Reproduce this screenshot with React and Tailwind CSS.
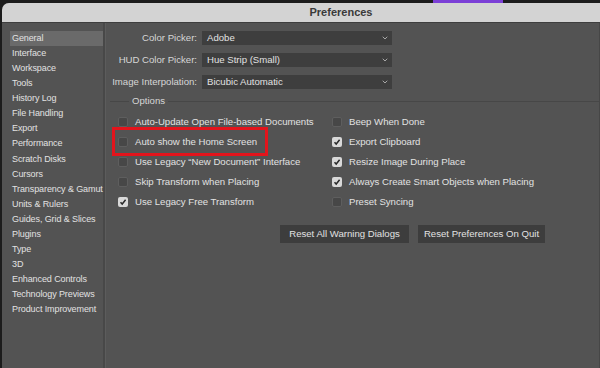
import React from 'react';
import { ChevronDown } from 'lucide-react';

const sections = [
  'General',
  'Interface',
  'Workspace',
  'Tools',
  'History Log',
  'File Handling',
  'Export',
  'Performance',
  'Scratch Disks',
  'Cursors',
  'Transparency & Gamut',
  'Units & Rulers',
  'Guides, Grid & Slices',
  'Plugins',
  'Type',
  '3D',
  'Enhanced Controls',
  'Technology Previews',
  'Product Improvement',
];

const pickers = [
  { label: 'Color Picker:', value: 'Adobe' },
  { label: 'HUD Color Picker:', value: 'Hue Strip (Small)' },
  { label: 'Image Interpolation:', value: 'Bicubic Automatic' },
];

const leftOptions = [
  { label: 'Auto-Update Open File-based Documents', checked: false },
  { label: 'Auto show the Home Screen', checked: false },
  { label: 'Use Legacy \u201CNew Document\u201D Interface', checked: false },
  { label: 'Skip Transform when Placing', checked: false },
  { label: 'Use Legacy Free Transform', checked: true },
];

const rightOptions = [
  { label: 'Beep When Done', checked: false },
  { label: 'Export Clipboard', checked: true },
  { label: 'Resize Image During Place', checked: true },
  { label: 'Always Create Smart Objects when Placing', checked: true },
  { label: 'Preset Syncing', checked: false },
];

const Checkbox = ({ checked }) => (
  <span
    className={`flex h-[10px] w-[10px] shrink-0 items-center justify-center rounded-[2px] ${
      checked ? 'bg-[#d9d9d9]' : 'border border-[#5e5e5e] bg-[#474747]'
    }`}
  >
    {checked && (
      <svg width="8" height="8" viewBox="0 0 8 8">
        <polyline points="1.5,4.2 3.2,6 6.6,1.8" fill="none" stroke="#2a2a2a" strokeWidth="1.5" />
      </svg>
    )}
  </span>
);

const OptionRow = ({ label, checked, highlight }) => (
  <div className="relative flex h-[20px] items-center gap-[7px]">
    <Checkbox checked={checked} />
    <span className="whitespace-nowrap">{label}</span>
    {highlight && (
      <span className="absolute left-[-6px] top-[-5px] h-[29px] w-[156px] border-[3px] border-[#e3141c]" />
    )}
  </div>
);

const App = () => {
  return (
    <div
      className="flex h-[368px] w-[600px] flex-col overflow-hidden bg-[#1c1c1c] text-[#e2e2e2]"
      style={{ fontFamily: '"Liberation Sans", Arial, sans-serif' }}
    >
      {/* desktop strip */}
      <div className="flex h-[3px] shrink-0">
        <div className="ml-[433px] w-[70px] bg-[#7b3fd6]" />
      </div>

      <div className="ml-[2px] flex flex-1 flex-col overflow-hidden rounded-tl-[7px] bg-[#535353]">
        {/* Title bar */}
        <div className="flex h-[20px] shrink-0 items-center justify-center border-b border-[#3e3e3e] bg-[#d3d3d3] pl-[80px] text-[11px] font-bold text-[#3a3a3a]">
          Preferences
        </div>

        <div className="flex flex-1">
          {/* Sidebar */}
          <div className="flex w-[103px] shrink-0 flex-col border-r-2 border-[#484848] pl-[8px] pt-[8px] text-[9px] tracking-[-0.1px]">
            {sections.map((s, i) => (
              <div
                key={s}
                className={`flex h-[15.1px] items-center pl-[2px] whitespace-nowrap ${
                  i === 0 ? 'bg-[#6a6a6a]' : ''
                }`}
              >
                {s}
              </div>
            ))}
          </div>

          {/* Main panel */}
          <div className="flex flex-1 flex-col border-l border-[#5c5c5c] border-r border-r-[#464646] pt-[8px] text-[9.6px]">
            <div className="grid grid-cols-[96px_190px] gap-y-[8px]">
              {pickers.map((p) => (
                <React.Fragment key={p.label}>
                  <div className="flex h-[14px] items-center justify-end pr-[5px] text-[#d6d6d6] whitespace-nowrap">
                    {p.label}
                  </div>
                  <div className="flex h-[14px] items-center justify-between bg-[#3e3e3e] pl-[5px] pr-[3px]">
                    <span>{p.value}</span>
                    <ChevronDown size={8} strokeWidth={2.5} className="text-[#bdbdbd]" />
                  </div>
                </React.Fragment>
              ))}
            </div>

            {/* Options group */}
            <fieldset className="ml-[4px] mt-[5px] border-t border-[#474747] pl-[8px] pt-[4px]">
              <legend className="ml-[11px] px-[3px] text-[9.6px] text-[#d6d6d6]">Options</legend>
              <div className="grid grid-cols-[214px_auto]">
                <div className="flex flex-col">
                  {leftOptions.map((o, i) => (
                    <OptionRow key={o.label} {...o} highlight={i === 1} />
                  ))}
                </div>
                <div className="flex flex-col">
                  {rightOptions.map((o) => (
                    <OptionRow key={o.label} {...o} />
                  ))}
                </div>
              </div>
            </fieldset>

            <div className="mt-[13px] flex gap-[9px] pl-[174px]">
              <button className="h-[18px] w-[129px] bg-[#3d3d3d] text-[9.6px] text-[#e2e2e2]">
                Reset All Warning Dialogs
              </button>
              <button className="h-[18px] w-[127px] bg-[#3d3d3d] text-[9.6px] text-[#e2e2e2]">
                Reset Preferences On Quit
              </button>
            </div>
          </div>
        </div>
      </div>
    </div>
  );
};

export default App;
